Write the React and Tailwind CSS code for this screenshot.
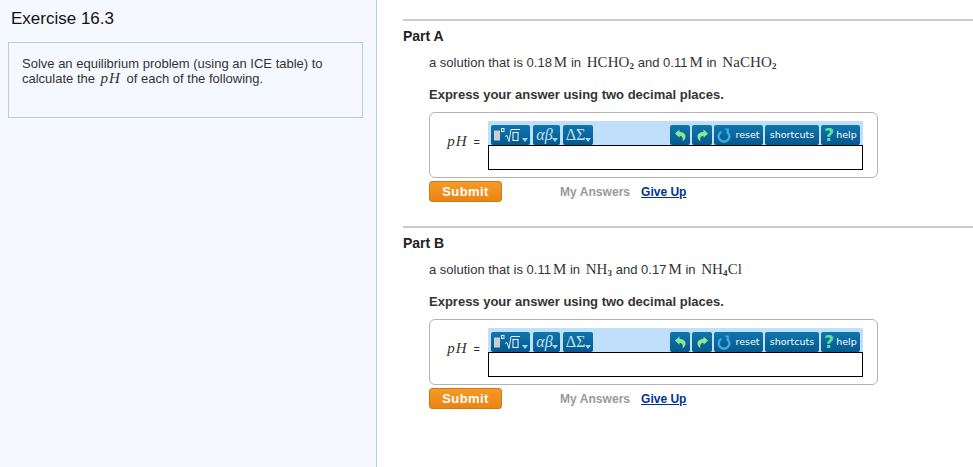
import React from 'react';

const sans = "font-['Liberation_Sans',Arial,sans-serif]";
const serif = "font-['Liberation_Serif','Times_New_Roman',serif]";
const tool = "font-['DejaVu_Sans',sans-serif] text-[9.5px] text-white";

function Caret() {
  return <span className="absolute right-[2px] bottom-[3px] w-0 h-0 border-x-[3px] border-x-transparent border-t-[4px] border-t-[#a9d4f2]" />;
}

// one dark blue toolbar button
function ToolButton({ width, children }) {
  return (
    <div
      className="relative flex items-center justify-center h-[20px] rounded-[2px] bg-gradient-to-b from-[#0f76ae] to-[#05598f] text-white shrink-0"
      style={{ width }}
    >
      {children}
    </div>
  );
}

function UndoIcon({ flip }) {
  return (
    <svg width="13" height="15" viewBox="0 0 13 14" className={flip ? '-scale-x-100' : ''}>
      <path d="M1 5 L5.5 1 L5.5 3.4 C9.5 3.4 11.5 5.6 11.5 8 C11.5 10 10.5 11.5 8.5 13 C9.3 10.5 8.8 7.3 5.5 7.2 L5.5 9.2 Z" fill="#8fe88f" />
    </svg>
  );
}

function Toolbar() {
  return (
    <div className="flex items-end justify-between h-[24px] bg-[#bfdffb] pl-[3px] pr-[3px]">
      <div className="flex gap-[3px]">
        <ToolButton width="39px">
          <svg width="32" height="17" viewBox="0 0 32 16" className="-ml-[4px]">
            <rect x="1" y="3" width="6" height="10" fill="#c9ced2" />
            <rect x="8.5" y="1" width="2.5" height="3" fill="none" stroke="#fff" strokeWidth="0.9" />
            <path d="M12 9 L14 8 L16 14 L18 2 L27 2" fill="none" stroke="#dbeefa" strokeWidth="1" />
            <rect x="20" y="5" width="5" height="8" fill="none" stroke="#fff" strokeWidth="1" />
          </svg>
          <Caret />
        </ToolButton>
        <ToolButton width="27px">
          <span className={`${serif} italic text-[16px] text-[#c4e0f5] -ml-[4px]`}>αβ</span>
          <Caret />
        </ToolButton>
        <ToolButton width="30px">
          <span className={`${serif} text-[16px] text-[#c4e0f5] -ml-[5px]`}>ΔΣ</span>
          <Caret />
        </ToolButton>
      </div>
      <div className="flex gap-[2px]">
        <ToolButton width="20px"><UndoIcon /></ToolButton>
        <ToolButton width="20px"><UndoIcon flip /></ToolButton>
        <ToolButton width="49px">
          <svg width="14" height="15" viewBox="0 0 13 14" className="mr-[4px]">
            <path d="M4 3.5 A5 5 0 1 0 9 3.5" fill="none" stroke="#3fa9e8" strokeWidth="2.2" />
            <path d="M7 0.5 L11 0.5 L11 5 Z" fill="#3fa9e8" />
          </svg>
          <span className={tool}>reset</span>
        </ToolButton>
        <ToolButton width="54px">
          <span className={tool}>shortcuts</span>
        </ToolButton>
        <ToolButton width="39px">
          <span className="font-['DejaVu_Sans',sans-serif] text-[17px] font-bold text-[#5fe0a0] mr-[2px] leading-none">?</span>
          <span className={tool}>help</span>
        </ToolButton>
      </div>
    </div>
  );
}

function Part({ title, children }) {
  return (
    <section className="h-[207px]">
      <div className="h-[2px] bg-[#cccccc]" />
      <h2 className="mt-[7px] text-[14px] leading-[16px] font-bold text-[#222]">{title}</h2>
      <div className="ml-[26px] w-[449px]">
        <p className="mt-[11px] h-[16px] text-[13px] leading-[16px] text-[#333] whitespace-nowrap">{children}</p>
        <p className="mt-[16px] text-[13px] leading-[16px] font-bold text-[#333] whitespace-nowrap">Express your answer using two decimal places.</p>
        <div className="mt-[9px] flex h-[66px] rounded-[6px] border border-[#b3b3b3] bg-white">
          <div className="w-[58px] pt-[20px] flex justify-end pr-[8px] items-baseline text-[#333] leading-[16px]">
            <span className={`${serif} italic text-[15px] tracking-[1px]`}>pH</span>
            <span className="text-[11px] ml-[6px]">=</span>
          </div>
          <div className="w-[375px] mt-[8px]">
            <Toolbar />
            <div className="h-[25px] border border-black bg-white" />
          </div>
        </div>
        <div className="mt-[3px] flex items-center h-[21px]">
          <button className="w-[73px] h-[21px] rounded-[3px] border border-[#cf7a14] bg-gradient-to-b from-[#f59a26] to-[#ea8413] text-white text-[13px] font-bold tracking-[0.4px]">Submit</button>
          <span className="ml-[58px] text-[12px] font-bold tracking-[0.05px] text-[#999999]">My Answers</span>
          <a className="ml-[11px] text-[12px] font-bold text-[#003399] underline">Give Up</a>
        </div>
      </div>
    </section>
  );
}

function Chem({ children }) {
  return <span className={`${serif} text-[15px] leading-none tracking-[0.1px] ml-[2px]`}>{children}</span>;
}

function Sub({ children }) {
  return <sub className="text-[9px] font-bold leading-none">{children}</sub>;
}

export default function App() {
  return (
    <div className={`${sans} flex w-[973px] h-[467px] overflow-hidden bg-white`}>
      {/* left panel */}
      <aside className="w-[377px] h-full shrink-0 border-r border-[#b8cde0] bg-[#f5f9ff] pt-[10px]">
        <h1 className="ml-[11px] text-[17px] leading-[18px] text-[#111]">Exercise 16.3</h1>
        <div className="ml-[8px] mt-[14px] w-[355px] h-[76px] border border-[#b8cde0] pl-[13px] pt-[13px] text-[13px] leading-[15px] text-[#333]">
          <p>Solve an equilibrium problem (using an ICE table) to</p>
          <p>calculate the <span className={`${serif} italic text-[15px] leading-none tracking-[1px] mx-[2px]`}>pH</span> of each of the following.</p>
        </div>
      </aside>

      {/* right panel */}
      <main className="flex-1 pl-[26px] pt-[19px]">
        <Part title="Part A">
          a solution that is 0.18<Chem>M</Chem> in <Chem>HCHO<Sub>2</Sub></Chem> and 0.11<Chem>M</Chem> in <Chem>NaCHO<Sub>2</Sub></Chem>
        </Part>
        <Part title="Part B">
          a solution that is 0.11<Chem>M</Chem> in <Chem>NH<Sub>3</Sub></Chem> and 0.17<Chem>M</Chem> in <Chem>NH<Sub>4</Sub>Cl</Chem>
        </Part>
      </main>
    </div>
  );
}
